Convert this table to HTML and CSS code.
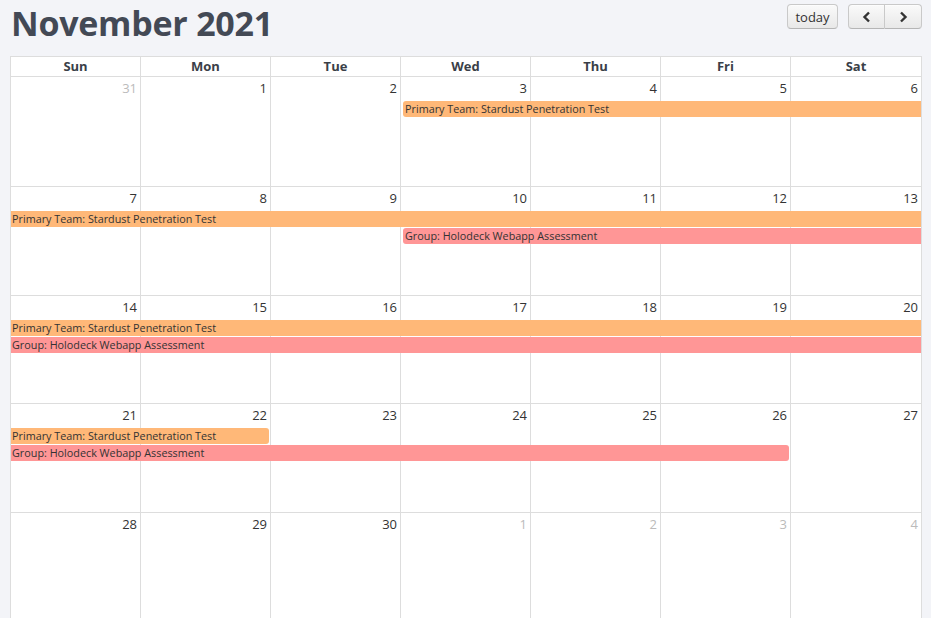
FILE: index.html
```html
<!DOCTYPE html>
<html>
<head>
<meta charset="utf-8">
<link rel="stylesheet" href="styles.css">
</head>
<body>
<div class="toolbar">
  <h1 class="title">November 2021</h1>
  <div class="actions">
    <button class="btn today">today</button>
    <div class="group">
      <button class="btn arrow"><svg width="10" height="12" viewBox="0 0 10 12"><path d="M7 1.5 L2.5 6 L7 10.5" fill="none" stroke="#333" stroke-width="2.4"/></svg></button>
      <button class="btn arrow"><svg width="10" height="12" viewBox="0 0 10 12"><path d="M3 1.5 L7.5 6 L3 10.5" fill="none" stroke="#333" stroke-width="2.4"/></svg></button>
    </div>
  </div>
</div>
<div class="cal">
  <div class="head">
    <div class="hc">Sun</div><div class="hc">Mon</div><div class="hc">Tue</div><div class="hc">Wed</div><div class="hc">Thu</div><div class="hc">Fri</div><div class="hc">Sat</div>
  </div>
  <div class="week w1">
    <div class="bg c1"></div><div class="bg c2"></div><div class="bg c3"></div><div class="bg c4"></div><div class="bg c5"></div><div class="bg c6"></div><div class="bg c7"></div>
    <div class="num c1 other">31</div><div class="num c2">1</div><div class="num c3">2</div><div class="num c4">3</div><div class="num c5">4</div><div class="num c6">5</div><div class="num c7">6</div>
    <div class="ev orange r2 s4 e8 start">Primary Team: Stardust Penetration Test</div>
  </div>
  <div class="week w2">
    <div class="bg c1"></div><div class="bg c2"></div><div class="bg c3"></div><div class="bg c4"></div><div class="bg c5"></div><div class="bg c6"></div><div class="bg c7"></div>
    <div class="num c1">7</div><div class="num c2">8</div><div class="num c3">9</div><div class="num c4">10</div><div class="num c5">11</div><div class="num c6">12</div><div class="num c7">13</div>
    <div class="ev orange r2 s1 e8">Primary Team: Stardust Penetration Test</div>
    <div class="ev red r3 s4 e8 start">Group: Holodeck Webapp Assessment</div>
  </div>
  <div class="week w3">
    <div class="bg c1"></div><div class="bg c2"></div><div class="bg c3"></div><div class="bg c4"></div><div class="bg c5"></div><div class="bg c6"></div><div class="bg c7"></div>
    <div class="num c1">14</div><div class="num c2">15</div><div class="num c3">16</div><div class="num c4">17</div><div class="num c5">18</div><div class="num c6">19</div><div class="num c7">20</div>
    <div class="ev orange r2 s1 e8">Primary Team: Stardust Penetration Test</div>
    <div class="ev red r3 s1 e8">Group: Holodeck Webapp Assessment</div>
  </div>
  <div class="week w4">
    <div class="bg c1"></div><div class="bg c2"></div><div class="bg c3"></div><div class="bg c4"></div><div class="bg c5"></div><div class="bg c6"></div><div class="bg c7"></div>
    <div class="num c1">21</div><div class="num c2">22</div><div class="num c3">23</div><div class="num c4">24</div><div class="num c5">25</div><div class="num c6">26</div><div class="num c7">27</div>
    <div class="ev orange r2 s1 e3 end">Primary Team: Stardust Penetration Test</div>
    <div class="ev red r3 s1 e7 end">Group: Holodeck Webapp Assessment</div>
  </div>
  <div class="week w5">
    <div class="bg c1"></div><div class="bg c2"></div><div class="bg c3"></div><div class="bg c4"></div><div class="bg c5"></div><div class="bg c6"></div><div class="bg c7"></div>
    <div class="num c1">28</div><div class="num c2">29</div><div class="num c3">30</div><div class="num c4 other">1</div><div class="num c5 other">2</div><div class="num c6 other">3</div><div class="num c7 other">4</div>
  </div>
</div>
</body>
</html>
```
FILE: styles.css
```css
html, body {
  margin: 0;
  padding: 0;
  background: #f3f4f8;
  font-family: "Open Sans", "Liberation Sans", sans-serif;
  color: #333;
}
.toolbar {
  display: flex;
  justify-content: space-between;
  align-items: flex-start;
  padding: 0 9px 0 11px;
  height: 56px;
}
.title {
  margin: 0;
  font-size: 34px;
  font-weight: 700;
  line-height: 46px;
  color: #434955;
  letter-spacing: -0.25px;
}
.actions {
  display: flex;
  gap: 10px;
  padding-top: 4px;
}
.btn {
  font-family: "Open Sans", "Liberation Sans", sans-serif;
  font-size: 13px;
  color: #333;
  height: 25px;
  border: 1px solid #c9c9c9;
  border-bottom-color: #b5b5b5;
  background: linear-gradient(#fafafa, #e8e8e8);
  border-radius: 4px;
  padding: 0 8px;
  box-shadow: inset 0 1px 0 rgba(255,255,255,0.5);
  display: flex;
  align-items: center;
  justify-content: center;
}
.today {
  width: 51px;
}
.group {
  display: flex;
}
.arrow {
  width: 37px;
  padding: 0;
}
.group .arrow:first-child {
  border-radius: 4px 0 0 4px;
}
.group .arrow:last-child {
  border-radius: 0 4px 4px 0;
  border-left: none;
}
.cal {
  margin: 0 9px 0 10px;
  border: 1px solid #ddd;
  border-bottom: none;
  background: #fff;
}
.head {
  display: grid;
  grid-template-columns: repeat(7, 1fr);
  height: 19px;
}
.hc {
  font-size: 13px;
  font-weight: 700;
  text-align: center;
  line-height: 19px;
  color: #3a3f48;
  border-right: 1px solid #ddd;
}
.hc:last-child {
  border-right: none;
}
.week {
  display: grid;
  grid-template-columns: repeat(7, 1fr);
  grid-template-rows: 24px 17px 17px 1fr;
  height: 108px;
  border-top: 1px solid #ddd;
}
.w1 { height: 109px; }
.w3 { height: 107px; }
.bg {
  grid-row: 1 / -1;
  background: #fff;
  border-right: 1px solid #ddd;
}
.bg.c7 {
  border-right: none;
}
.c1 { grid-column: 1; }
.c2 { grid-column: 2; }
.c3 { grid-column: 3; }
.c4 { grid-column: 4; }
.c5 { grid-column: 5; }
.c6 { grid-column: 6; }
.c7 { grid-column: 7; }
.num {
  grid-row: 1;
  text-align: right;
  font-size: 13px;
  line-height: 18px;
  padding: 2px 4px 0 0;
  color: #333;
}
.num.c7 {
  padding-right: 3px;
}
.num.other {
  color: #bbb;
}
.ev {
  font-size: 10.8px;
  line-height: 16px;
  height: 16px;
  padding-left: 1px;
  white-space: nowrap;
  overflow: hidden;
  color: #333;
  align-self: start;
}
.r2 { grid-row: 2; }
.r3 { grid-row: 3; }
.s1 { grid-column-start: 1; }
.s4 { grid-column-start: 4; }
.e3 { grid-column-end: 3; }
.e7 { grid-column-end: 7; }
.e8 { grid-column-end: 8; }
.orange { background: #ffb878; }
.red { background: #ff9696; }
.start {
  margin-left: 2px;
  padding-left: 2px;
  border-radius: 3px 0 0 3px;
}
.end {
  margin-right: 2px;
  border-radius: 0 3px 3px 0;
}
```
